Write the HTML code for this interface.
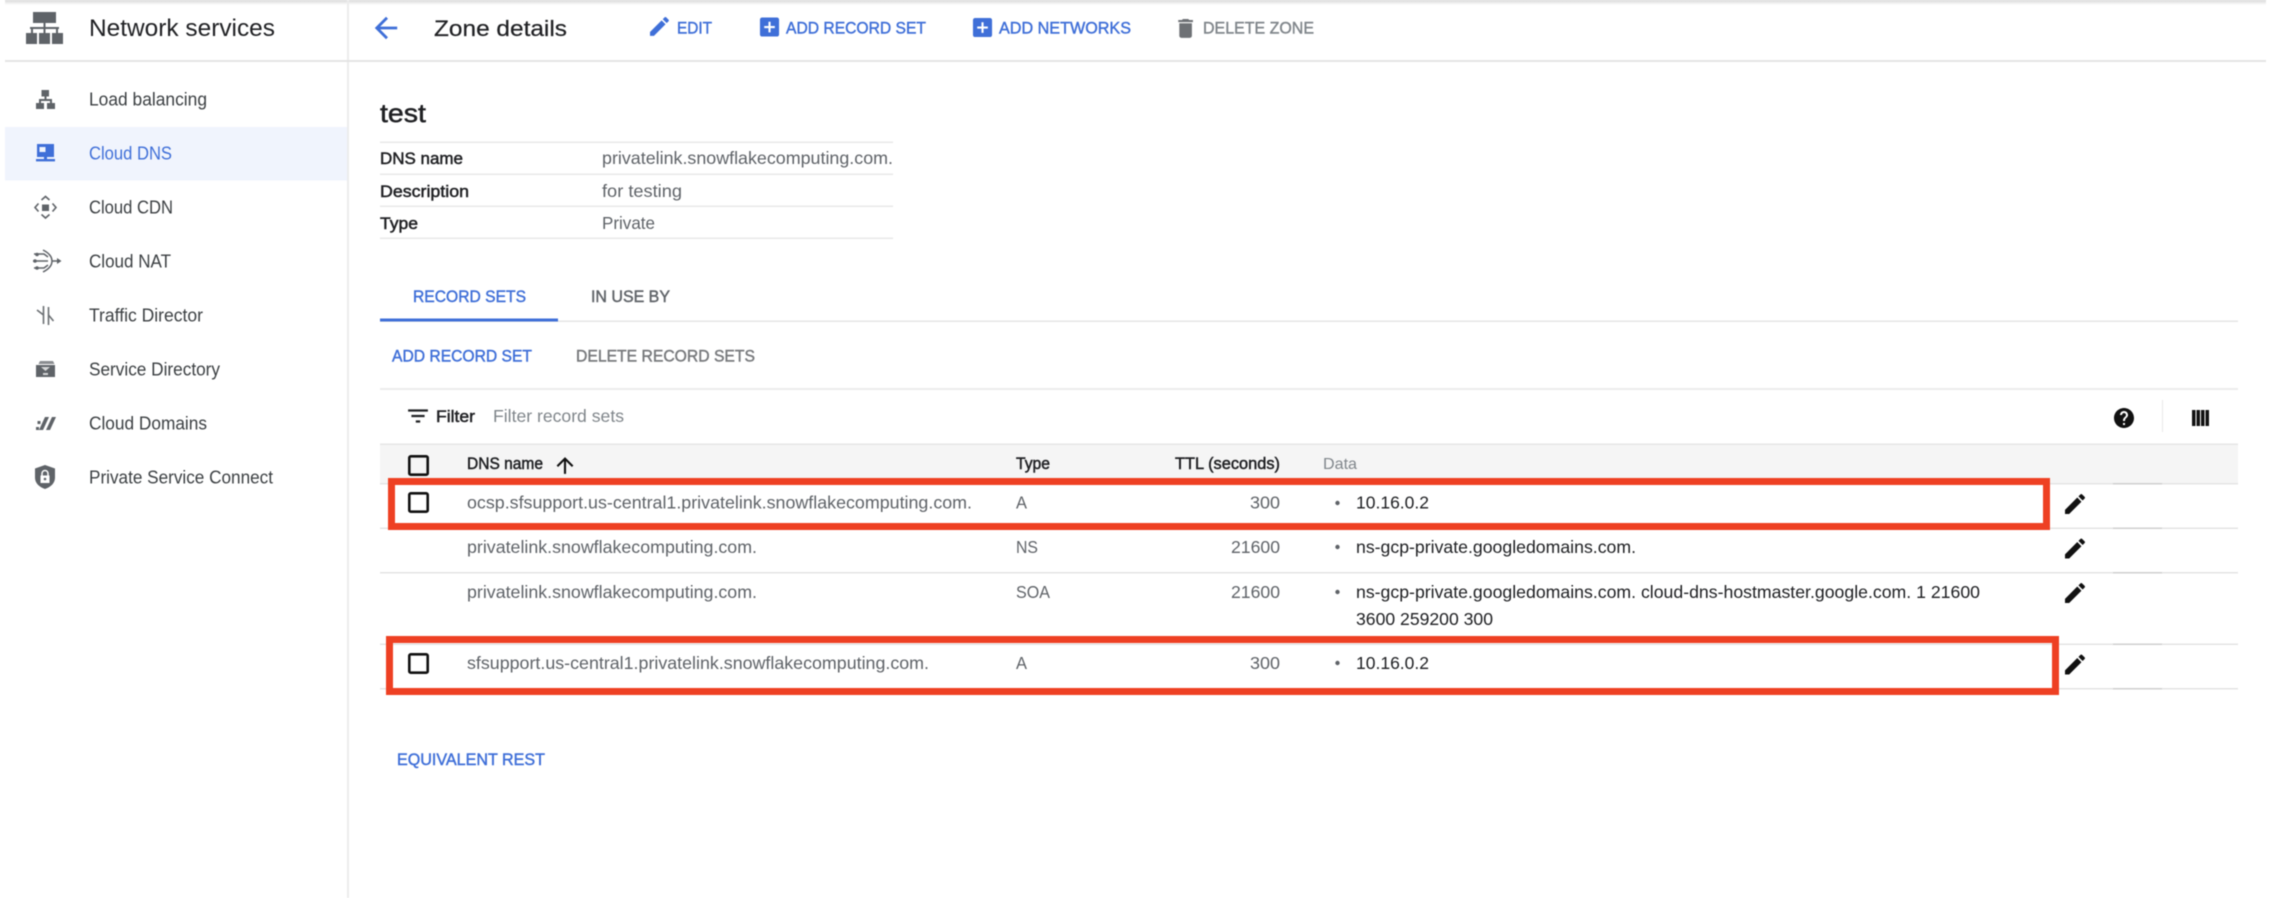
<!DOCTYPE html>
<html lang="en">
<head>
<meta charset="utf-8">
<title>Zone details</title>
<style>
html,body{margin:0;padding:0;background:#fff;width:2286px;height:898px;overflow:hidden}
svg{display:block;filter:blur(.45px)}
text{font-family:"Liberation Sans",Arial,sans-serif;font-size:17.5px;fill:#5f6368}
.d{fill:#202124}
.b{fill:#3f6fd8;font-size:17px;stroke:#3f6fd8;stroke-width:.45px}
.g{fill:#5f6368;font-size:17px;stroke:#5f6368;stroke-width:.45px}
.h{fill:#202124;font-size:17px;stroke:#202124;stroke-width:.5px}
.s{font-size:18px;fill:#3c4043}
</style>
</head>
<body>
<svg xmlns="http://www.w3.org/2000/svg" width="2286" height="898" viewBox="0 0 2286 898">
<defs>
<linearGradient id="t" x1="0" y1="0" x2="0" y2="1"><stop offset="0" stop-color="#d8d8d8"/><stop offset="1" stop-color="#fff"/></linearGradient>
<path id="pen" d="M3 17.25V21h3.75L17.81 9.94l-3.75-3.75L3 17.25zM20.71 7.04c.39-.39.39-1.02 0-1.41l-2.34-2.34c-.39-.39-1.02-.39-1.41 0l-1.83 1.83 3.75 3.75 1.83-1.83z"/>
<path id="add" d="M19 3H5c-1.11 0-2 .9-2 2v14c0 1.1.89 2 2 2h14c1.1 0 2-.9 2-2V5c0-1.1-.9-2-2-2zm-2 10h-4v4h-2v-4H7v-2h4V7h2v4h4v2z"/>
</defs>
<rect width="2286" height="898" fill="#fff"/>
<!-- top shadow -->
<rect x="5" y="0" width="2261" height="5" fill="url(#t)"/>
<!-- highlight, sidebar divider, header line -->
<rect x="5" y="127" width="342" height="53.5" fill="#f0f4fd"/>
<rect x="347" y="0" width="2" height="898" fill="#ececec"/>
<rect x="5" y="60" width="2261" height="2" fill="#e4e4e4"/>

<!-- Sidebar header -->
<g fill="#5f6368">
<rect x="33" y="12" width="23" height="11"/>
<rect x="43.5" y="23" width="2" height="5"/>
<rect x="30" y="27" width="29" height="2"/>
<rect x="31" y="29" width="2" height="4"/><rect x="43.5" y="29" width="2" height="4"/><rect x="56" y="29" width="2" height="4"/>
<rect x="26" y="33" width="11" height="11"/><rect x="39" y="33" width="11" height="11"/><rect x="52" y="33" width="11" height="11"/>
</g>
<text x="89" y="36" style="font-size:24px;fill:#202124" textLength="186" lengthAdjust="spacingAndGlyphs">Network services</text>

<!-- Sidebar icons -->
<g fill="#5f6368">
<rect x="41.5" y="90" width="7.5" height="6.5"/><rect x="44.5" y="96" width="2" height="4"/><rect x="39" y="99" width="13" height="2"/><rect x="39" y="100" width="2" height="3"/><rect x="50" y="100" width="2" height="3"/>
<rect x="36" y="103" width="8" height="6"/><rect x="47" y="103" width="8" height="6"/>
</g>
<g fill="#3f6fd8">
<path d="M37 144h17v13H37z M39.5 147v5h6v-5z" fill-rule="evenodd"/>
<rect x="44" y="157" width="3" height="3"/><rect x="36" y="159" width="19" height="2.4"/>
</g>
<g fill="none" stroke="#5f6368" stroke-width="1.6">
<path d="M41.5 200l4-3.5 4 3.5M41.5 214.5l4 3.5 4-3.5M38.5 203.5l-3.5 4 3.5 4M52.5 203.5l3.5 4-3.5 4"/>
</g>
<rect x="42" y="204.5" width="7" height="6.5" fill="#5f6368"/>
<g fill="none" stroke="#5f6368" stroke-width="1.5">
<path d="M43 250c6 3 9 7 9 11s-3 8-9 11"/>
<path d="M34 254h10l4 3M33 261h15M34 268h10l4-3M52 261h6"/>
</g>
<g fill="#5f6368"><circle cx="37" cy="254.5" r="1.8"/><circle cx="35" cy="261" r="1.8"/><circle cx="37" cy="268" r="1.8"/><path d="M57 258l4.5 3-4.5 3z"/></g>
<g fill="none" stroke="#6b6f73" stroke-width="1.6">
<path d="M43.5 306v18M48.5 307v18M37 310l6.500 5M48.500 315l5 6"/>
</g>
<path d="M40 361h13l1.500 3h-16z" fill="#8a8d90"/>
<path d="M36 365h19v12H36z" fill="#5f6368"/>
<path d="M41 367h9l-4.500 4z M43 373h5v2h-5z" fill="#d5d6d7"/>
<g fill="#5f6368">
<rect x="36" y="427" width="3" height="3"/><rect x="37.500" y="421" width="3" height="3"/>
<path d="M45 417h4l-6 13h-4z M52 417h4l-6 13h-4z"/>
</g>
<path d="M45 465l10 3.500v9c0 5.500-4 9.500-10 11.500c-6-2-10-6-10-11.500v-9z" fill="#5f6368"/>
<path d="M40.500 475.500h9v7.500h-9z" fill="#fff"/>
<path d="M42 475.500v-2a3 3 0 0 1 6 0v2" fill="none" stroke="#fff" stroke-width="1.500"/>
<circle cx="45" cy="479" r="1.300" fill="#5f6368"/>

<!-- Sidebar labels -->
<g>
<text class="s" x="89" y="105.500" textLength="118" lengthAdjust="spacingAndGlyphs">Load balancing</text>
<text class="s" x="89" y="159.500" style="fill:#3f6fd8" textLength="83" lengthAdjust="spacingAndGlyphs">Cloud DNS</text>
<text class="s" x="89" y="213.500" textLength="84" lengthAdjust="spacingAndGlyphs">Cloud CDN</text>
<text class="s" x="89" y="267.500" textLength="82" lengthAdjust="spacingAndGlyphs">Cloud NAT</text>
<text class="s" x="89" y="321.500" textLength="114" lengthAdjust="spacingAndGlyphs">Traffic Director</text>
<text class="s" x="89" y="375.500" textLength="131" lengthAdjust="spacingAndGlyphs">Service Directory</text>
<text class="s" x="89" y="429.500" textLength="118" lengthAdjust="spacingAndGlyphs">Cloud Domains</text>
<text class="s" x="89" y="483.500" textLength="184" lengthAdjust="spacingAndGlyphs">Private Service Connect</text>
</g>

<!-- Top action bar -->
<path transform="translate(369.200 11.200) scale(1.400)" fill="#3f6fd8" d="M20 11H7.830l5.590-5.590L12 4l-8 8 8 8 1.410-1.410L7.830 13H20v-2z"/>
<text x="434" y="36" style="font-size:22px;fill:#202124;stroke:#202124;stroke-width:.2px" textLength="133" lengthAdjust="spacingAndGlyphs">Zone details</text>
<use href="#pen" transform="translate(646.850 13.850) scale(1.050)" fill="#3f6fd8"/>
<text class="b" x="677" y="33.500" textLength="35" lengthAdjust="spacingAndGlyphs">EDIT</text>
<use href="#add" transform="translate(756.800 14.300) scale(1.060)" fill="#3f6fd8"/>
<text class="b" x="786" y="33.500" textLength="140" lengthAdjust="spacingAndGlyphs">ADD RECORD SET</text>
<use href="#add" transform="translate(969.800 14.800) scale(1.060)" fill="#3f6fd8"/>
<text class="b" x="999" y="33.500" textLength="132" lengthAdjust="spacingAndGlyphs">ADD NETWORKS</text>
<path transform="translate(1173 15.850) scale(1.050)" fill="#6e7175" d="M6 19c0 1.100.900 2 2 2h8c1.100 0 2-.900 2-2V7H6v12zM19 4h-3.500l-1-1h-5l-1 1H5v2h14V4z"/>
<text class="g" x="1203" y="33.500" style="fill:#80868b;stroke:#80868b" textLength="111" lengthAdjust="spacingAndGlyphs">DELETE ZONE</text>

<!-- Zone info -->
<text x="380" y="122" style="font-size:26px;fill:#202124;stroke:#202124;stroke-width:.5px" textLength="46" lengthAdjust="spacingAndGlyphs">test</text>
<g fill="#e8e8e8">
<rect x="380" y="141.500" width="513" height="1.500"/><rect x="380" y="173.500" width="513" height="1.500"/><rect x="380" y="205.500" width="513" height="1.500"/><rect x="380" y="237.500" width="513" height="1.500"/>
</g>
<text class="h" x="380" y="164" textLength="83" lengthAdjust="spacingAndGlyphs">DNS name</text>
<text class="h" x="380" y="197" textLength="89" lengthAdjust="spacingAndGlyphs">Description</text>
<text class="h" x="380" y="229" textLength="38" lengthAdjust="spacingAndGlyphs">Type</text>
<text x="602" y="164" textLength="291" lengthAdjust="spacingAndGlyphs">privatelink.snowflakecomputing.com.</text>
<text x="602" y="197" textLength="80" lengthAdjust="spacingAndGlyphs">for testing</text>
<text x="602" y="229" textLength="53" lengthAdjust="spacingAndGlyphs">Private</text>

<!-- Tabs -->
<text class="b" x="413" y="302" textLength="113" lengthAdjust="spacingAndGlyphs">RECORD SETS</text>
<text class="g" x="591" y="302" textLength="79" lengthAdjust="spacingAndGlyphs">IN USE BY</text>
<rect x="380" y="320.500" width="1858" height="1.500" fill="#e6e6e6"/>
<rect x="380" y="318.500" width="178" height="3" fill="#3f6fd8"/>

<text class="b" x="392" y="361.500" textLength="140" lengthAdjust="spacingAndGlyphs">ADD RECORD SET</text>
<text class="g" x="576" y="361.500" style="fill:#77797c;stroke:#77797c" textLength="179" lengthAdjust="spacingAndGlyphs">DELETE RECORD SETS</text>
<rect x="380" y="388" width="1858" height="2" fill="#ececec"/>

<!-- Filter -->
<path transform="translate(404.800 402.800) scale(1.100)" fill="#202124" d="M10 18h4v-2h-4v2zM3 6v2h18V6H3zm3 7h12v-2H6v2z"/>
<text class="h" x="436" y="422" textLength="39" lengthAdjust="spacingAndGlyphs">Filter</text>
<text x="493" y="422" style="fill:#80868b" textLength="131" lengthAdjust="spacingAndGlyphs">Filter record sets</text>
<path transform="translate(2112 406)" fill="#111" d="M12 2C6.480 2 2 6.480 2 12s4.480 10 10 10 10-4.480 10-10S17.520 2 12 2zm1 17h-2v-2h2v2zm2.070-7.750l-.900.920C13.450 12.900 13 13.500 13 15h-2v-.500c0-1.100.450-2.100 1.170-2.830l1.240-1.260c.370-.360.590-.860.590-1.410 0-1.100-.900-2-2-2s-2 .900-2 2H8c0-2.210 1.790-4 4-4s4 1.790 4 4c0 .880-.360 1.680-.930 2.250z"/>
<rect x="2162" y="400" width="1" height="32" fill="#e8e8e8"/>
<g fill="#111"><rect x="2192" y="410" width="3.500" height="16"/><rect x="2196.500" y="410" width="3.500" height="16"/><rect x="2201" y="410" width="3.500" height="16"/><rect x="2205.500" y="410" width="3.500" height="16"/></g>

<!-- Table header -->
<rect x="380" y="444" width="1858" height="39" fill="#f5f5f5"/>
<rect x="380" y="443.500" width="1858" height="1.500" fill="#e6e6e6"/>
<g fill="#e4e4e4">
<rect x="380" y="483" width="1858" height="1.500"/>
<rect x="380" y="527.500" width="1858" height="1.500"/>
<rect x="380" y="572" width="1858" height="1.500"/>
<rect x="380" y="643.500" width="1858" height="1.500"/>
<rect x="380" y="688" width="1858" height="1.500"/>
</g>
<g fill="#cfcfcf">
<rect x="2113" y="483" width="49" height="1.500"/><rect x="2113" y="527.500" width="49" height="1.500"/><rect x="2113" y="572" width="49" height="1.500"/><rect x="2113" y="643.500" width="49" height="1.500"/><rect x="2113" y="688" width="49" height="1.500"/>
</g>

<g fill="none" stroke="#111" stroke-width="2.600">
<rect x="409.300" y="456.300" width="18.400" height="18.400" rx="1.500"/>
<rect x="409.300" y="493.300" width="18.400" height="18.400" rx="1.500"/>
<rect x="409.300" y="654.300" width="18.400" height="18.400" rx="1.500"/>
</g>

<text class="h" x="467" y="469" textLength="76" lengthAdjust="spacingAndGlyphs">DNS name</text>
<path transform="translate(552.400 452.900) scale(1.050)" fill="#111" d="M4 12l1.410 1.410L11 7.830V20h2V7.830l5.580 5.590L20 12l-8-8-8 8z"/>
<text class="h" x="1016" y="469" textLength="34" lengthAdjust="spacingAndGlyphs">Type</text>
<text class="h" x="1175" y="469" textLength="105" lengthAdjust="spacingAndGlyphs">TTL (seconds)</text>
<text x="1323" y="469" style="fill:#80868b;font-size:16px" textLength="34" lengthAdjust="spacingAndGlyphs">Data</text>

<!-- Rows -->
<text x="467" y="508.500" textLength="505" lengthAdjust="spacingAndGlyphs">ocsp.sfsupport.us-central1.privatelink.snowflakecomputing.com.</text>
<text x="1016" y="508.500" textLength="11" lengthAdjust="spacingAndGlyphs">A</text>
<text x="1250" y="508.500" textLength="30" lengthAdjust="spacingAndGlyphs">300</text>
<circle cx="1337.500" cy="503" r="2.200" fill="#5f6368"/>
<text class="d" x="1356" y="508.500" textLength="73" lengthAdjust="spacingAndGlyphs">10.16.0.2</text>

<text x="467" y="553" textLength="290" lengthAdjust="spacingAndGlyphs">privatelink.snowflakecomputing.com.</text>
<text x="1016" y="553" textLength="22" lengthAdjust="spacingAndGlyphs">NS</text>
<text x="1231" y="553" textLength="49" lengthAdjust="spacingAndGlyphs">21600</text>
<circle cx="1337.500" cy="547" r="2.200" fill="#5f6368"/>
<text class="d" x="1356" y="553" textLength="280" lengthAdjust="spacingAndGlyphs">ns-gcp-private.googledomains.com.</text>

<text x="467" y="598" textLength="290" lengthAdjust="spacingAndGlyphs">privatelink.snowflakecomputing.com.</text>
<text x="1016" y="598" textLength="34" lengthAdjust="spacingAndGlyphs">SOA</text>
<text x="1231" y="598" textLength="49" lengthAdjust="spacingAndGlyphs">21600</text>
<circle cx="1337.500" cy="592" r="2.200" fill="#5f6368"/>
<text class="d" x="1356" y="598" textLength="624" lengthAdjust="spacingAndGlyphs">ns-gcp-private.googledomains.com. cloud-dns-hostmaster.google.com. 1 21600</text>
<text class="d" x="1356" y="625" textLength="137" lengthAdjust="spacingAndGlyphs">3600 259200 300</text>

<text x="467" y="669" textLength="462" lengthAdjust="spacingAndGlyphs">sfsupport.us-central1.privatelink.snowflakecomputing.com.</text>
<text x="1016" y="669" textLength="11" lengthAdjust="spacingAndGlyphs">A</text>
<text x="1250" y="669" textLength="30" lengthAdjust="spacingAndGlyphs">300</text>
<circle cx="1337.500" cy="663" r="2.200" fill="#5f6368"/>
<text class="d" x="1356" y="669" textLength="73" lengthAdjust="spacingAndGlyphs">10.16.0.2</text>

<!-- Row pencils -->
<g fill="#111">
<use href="#pen" transform="translate(2061.670 490.670) scale(1.110)"/>
<use href="#pen" transform="translate(2061.670 535.170) scale(1.110)"/>
<use href="#pen" transform="translate(2061.670 579.670) scale(1.110)"/>
<use href="#pen" transform="translate(2061.670 651.170) scale(1.110)"/>
</g>

<!-- Red annotation boxes -->
<rect x="391.500" y="481.500" width="1655" height="45" fill="none" stroke="#ee4023" stroke-width="7"/>
<rect x="389.500" y="639.500" width="1666" height="52" fill="none" stroke="#ee4023" stroke-width="7"/>

<text class="b" x="397" y="765" textLength="148" lengthAdjust="spacingAndGlyphs">EQUIVALENT REST</text>
</svg>
</body>
</html>
